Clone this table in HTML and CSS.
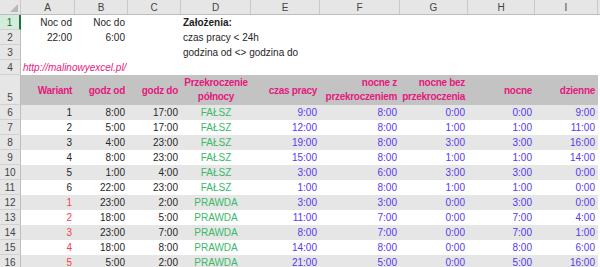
FILE: index.html
```html
<!DOCTYPE html>
<html lang="pl">
<head>
<meta charset="utf-8">
<title>Arkusz</title>
<link rel="stylesheet" href="styles.css">
</head>
<body>
<div class="sheet">
  <div class="row colhead">
    <div class="corner"><span class="tri"></span></div>
    <div class="ch">A</div><div class="ch">B</div><div class="ch">C</div><div class="ch">D</div><div class="ch">E</div><div class="ch">F</div><div class="ch">G</div><div class="ch">H</div><div class="ch">I</div>
  </div>
  <div class="row">
    <div class="rh active">1</div>
    <div class="c r">Noc od</div><div class="c r">Noc do</div><div class="c"></div><div class="c l bold dark">Założenia:</div><div class="c"></div><div class="c"></div><div class="c"></div><div class="c"></div><div class="c"></div>
  </div>
  <div class="row">
    <div class="rh">2</div>
    <div class="c r">22:00</div><div class="c r">6:00</div><div class="c"></div><div class="c l">czas pracy &lt; 24h</div><div class="c"></div><div class="c"></div><div class="c"></div><div class="c"></div><div class="c"></div>
  </div>
  <div class="row">
    <div class="rh">3</div>
    <div class="c"></div><div class="c"></div><div class="c"></div><div class="c l">godzina od &lt;&gt; godzina do</div><div class="c"></div><div class="c"></div><div class="c"></div><div class="c"></div><div class="c"></div>
  </div>
  <div class="row">
    <div class="rh">4</div>
    <div class="c l link">http://malinowyexcel.pl/</div><div class="c"></div><div class="c"></div><div class="c"></div><div class="c"></div><div class="c"></div><div class="c"></div><div class="c"></div><div class="c"></div>
  </div>
  <div class="row tall">
    <div class="rh bottom">5</div>
    <div class="c r hd">Wariant</div>
    <div class="c r hd">godz od</div>
    <div class="c r hd">godz do</div>
    <div class="c m hd two">Przekroczenie<br>północy</div>
    <div class="c r hd">czas pracy</div>
    <div class="c r hd two">nocne z<br>przekroczeniem</div>
    <div class="c r hd two">nocne bez<br>przekroczenia</div>
    <div class="c r hd">nocne</div>
    <div class="c r hd">dzienne</div>
  </div>

  <div class="row band"><div class="rh">6</div><div class="c r">1</div><div class="c r">8:00</div><div class="c r">17:00</div><div class="c m green">FAŁSZ</div><div class="c r blue">9:00</div><div class="c r blue">8:00</div><div class="c r blue">0:00</div><div class="c r blue">0:00</div><div class="c r blue">9:00</div></div>
  <div class="row"><div class="rh">7</div><div class="c r">2</div><div class="c r">5:00</div><div class="c r">17:00</div><div class="c m green">FAŁSZ</div><div class="c r blue">12:00</div><div class="c r blue">8:00</div><div class="c r blue">1:00</div><div class="c r blue">1:00</div><div class="c r blue">11:00</div></div>
  <div class="row band"><div class="rh">8</div><div class="c r">3</div><div class="c r">4:00</div><div class="c r">23:00</div><div class="c m green">FAŁSZ</div><div class="c r blue">19:00</div><div class="c r blue">8:00</div><div class="c r blue">3:00</div><div class="c r blue">3:00</div><div class="c r blue">16:00</div></div>
  <div class="row"><div class="rh">9</div><div class="c r">4</div><div class="c r">8:00</div><div class="c r">23:00</div><div class="c m green">FAŁSZ</div><div class="c r blue">15:00</div><div class="c r blue">8:00</div><div class="c r blue">1:00</div><div class="c r blue">1:00</div><div class="c r blue">14:00</div></div>
  <div class="row band"><div class="rh">10</div><div class="c r">5</div><div class="c r">1:00</div><div class="c r">4:00</div><div class="c m green">FAŁSZ</div><div class="c r blue">3:00</div><div class="c r blue">6:00</div><div class="c r blue">3:00</div><div class="c r blue">3:00</div><div class="c r blue">0:00</div></div>
  <div class="row"><div class="rh">11</div><div class="c r">6</div><div class="c r">22:00</div><div class="c r">23:00</div><div class="c m green">FAŁSZ</div><div class="c r blue">1:00</div><div class="c r blue">8:00</div><div class="c r blue">1:00</div><div class="c r blue">1:00</div><div class="c r blue">0:00</div></div>
  <div class="row band"><div class="rh">12</div><div class="c r red">1</div><div class="c r">23:00</div><div class="c r">2:00</div><div class="c m green">PRAWDA</div><div class="c r blue">3:00</div><div class="c r blue">3:00</div><div class="c r blue">0:00</div><div class="c r blue">3:00</div><div class="c r blue">0:00</div></div>
  <div class="row"><div class="rh">13</div><div class="c r red">2</div><div class="c r">18:00</div><div class="c r">5:00</div><div class="c m green">PRAWDA</div><div class="c r blue">11:00</div><div class="c r blue">7:00</div><div class="c r blue">0:00</div><div class="c r blue">7:00</div><div class="c r blue">4:00</div></div>
  <div class="row band"><div class="rh">14</div><div class="c r red">3</div><div class="c r">23:00</div><div class="c r">7:00</div><div class="c m green">PRAWDA</div><div class="c r blue">8:00</div><div class="c r blue">7:00</div><div class="c r blue">0:00</div><div class="c r blue">7:00</div><div class="c r blue">1:00</div></div>
  <div class="row"><div class="rh">15</div><div class="c r red">4</div><div class="c r">18:00</div><div class="c r">8:00</div><div class="c m green">PRAWDA</div><div class="c r blue">14:00</div><div class="c r blue">8:00</div><div class="c r blue">0:00</div><div class="c r blue">8:00</div><div class="c r blue">6:00</div></div>
  <div class="row band"><div class="rh">16</div><div class="c r red">5</div><div class="c r">5:00</div><div class="c r">2:00</div><div class="c m green">PRAWDA</div><div class="c r blue">21:00</div><div class="c r blue">5:00</div><div class="c r blue">0:00</div><div class="c r blue">5:00</div><div class="c r blue">16:00</div></div>
</div>
</body>
</html>
```

FILE: styles.css
```css
html, body {
  margin: 0;
  padding: 0;
  background: #ffffff;
  overflow: hidden;
}

.sheet {
  width: 600px;
  height: 267px;
  overflow: hidden;
  font-family: "Liberation Sans", Arial, sans-serif;
  font-size: 10px;
  color: #262626;
  display: flex;
  flex-direction: column;
}

.row {
  display: grid;
  grid-template-columns: 21px 54px 53px 53px 70px 69px 80px 68px 67px 63px;
  height: 15px;
  flex: 0 0 auto;
}

.row.tall {
  height: 30px;
}

.colhead {
  background: #e6e6e6;
  border-bottom: 1px solid #bdbdbd;
  box-sizing: border-box;
}

.corner {
  position: relative;
  border-right: 1px solid #c9c9c9;
}

.tri {
  position: absolute;
  right: 2px;
  bottom: 2px;
  width: 0;
  height: 0;
  border-left: 8px solid transparent;
  border-bottom: 8px solid #b8b8b8;
}

.ch {
  display: flex;
  align-items: center;
  justify-content: center;
  color: #444444;
  border-right: 1px solid #c9c9c9;
  box-sizing: border-box;
}

.rh {
  display: flex;
  align-items: center;
  justify-content: center;
  background: #e6e6e6;
  color: #444444;
  border-right: 1px solid #bdbdbd;
  border-bottom: 1px solid #d2d2d2;
  box-sizing: border-box;
}

.rh.active {
  background: #d3ecdc;
  color: #1d6b3e;
  border-right: 2px solid #217346;
}

.rh.bottom {
  align-items: flex-end;
  padding-bottom: 1px;
}

.c {
  display: flex;
  align-items: center;
  white-space: nowrap;
  padding: 0 3px;
  min-width: 0;
  box-sizing: border-box;
  overflow: visible;
}

.c.r { justify-content: flex-end; }
.c.l { justify-content: flex-start; padding-left: 2px; }
.c.m { justify-content: center; }

.bold { font-weight: bold; }
.dark { color: #222222; }

.link {
  color: #e2197d;
  font-style: italic;
}

.tall .c {
  background: #c3c3c3;
}

.hd {
  color: #e5197e;
  font-weight: bold;
  letter-spacing: -0.3px;
}

.hd.two {
  text-align: right;
  line-height: 14px;
}

.c.m.two {
  text-align: center;
}

.band .c {
  background: #e6e6e6;
}

.blue { color: #5638f2; }
.green { color: #39b96a; }
.red { color: #f2444c; }
```
